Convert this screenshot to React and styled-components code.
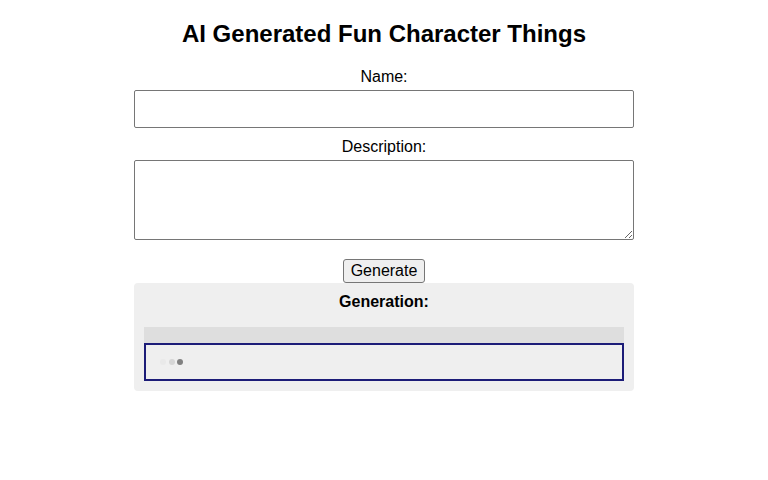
import React, { useState } from "react";
import styled, { createGlobalStyle } from "styled-components";

const GlobalStyle = createGlobalStyle`
  body {
    margin: 0;
    background: #fff;
    font-family: "Liberation Sans", Arial, sans-serif;
    color: #000;
  }
`;

const Page = styled.div`
  width: 500px;
  margin: 0 auto;
  padding-top: 20px;
  display: flex;
  flex-direction: column;
  align-items: center;
`;

const Title = styled.h1`
  margin: 0 0 21px;
  font-size: 24px;
  font-weight: bold;
  line-height: 27px;
  text-align: center;
`;

const Label = styled.label`
  display: block;
  font-size: 16px;
  line-height: 18px;
  margin-bottom: 4px;
  text-align: center;
`;

const TextInput = styled.input`
  box-sizing: border-box;
  width: 500px;
  height: 38px;
  margin: 0 0 10px;
  border: 1px solid #767676;
  border-radius: 2px;
  font: 16px "Liberation Sans", Arial, sans-serif;
  padding: 4px 8px;
`;

const TextArea = styled.textarea`
  box-sizing: border-box;
  display: block;
  width: 500px;
  height: 80px;
  margin: 0 0 19px;
  border: 1px solid #767676;
  border-radius: 2px;
  font: 16px "Liberation Sans", Arial, sans-serif;
  padding: 4px 8px;
`;

const Button = styled.button`
  box-sizing: border-box;
  height: 24px;
  padding: 2px 7px;
  font: 16px "Liberation Sans", Arial, sans-serif;
  line-height: 18px;
  color: #000;
  background: #efefef;
  border: 1px solid #767676;
  border-radius: 3px;
  cursor: pointer;
`;

const Panel = styled.section`
  box-sizing: border-box;
  width: 500px;
  padding: 10px 10px 10px;
  background: #efefef;
  border-radius: 4px;
`;

const PanelTitle = styled.h3`
  margin: 0 0 16px;
  font-size: 16px;
  line-height: 18px;
  font-weight: bold;
  text-align: center;
`;

const Bar = styled.div`
  height: 16px;
  background: #dedede;
`;

const Output = styled.div`
  box-sizing: border-box;
  height: 38px;
  border: 2px solid #1c1c78;
  display: flex;
  align-items: center;
  gap: 2.5px;
  padding-left: 14px;
`;

const Dot = styled.span`
  width: 6px;
  height: 6px;
  border-radius: 50%;
  background: ${(p) => p.$color};
`;

export default function App() {
  const [name, setName] = useState("");
  const [desc, setDesc] = useState("");

  return (
    <>
      <GlobalStyle />
      <Page>
        <Title>AI Generated Fun Character Things</Title>
        <Label htmlFor="name">Name:</Label>
        <TextInput id="name" value={name} onChange={(e) => setName(e.target.value)} />
        <Label htmlFor="desc">Description:</Label>
        <TextArea id="desc" value={desc} onChange={(e) => setDesc(e.target.value)} />
        <Button>Generate</Button>
        <Panel>
          <PanelTitle>Generation:</PanelTitle>
          <Bar />
          <Output>
            <Dot $color="#e9e9e9" />
            <Dot $color="#d6d6d6" />
            <Dot $color="#808080" />
          </Output>
        </Panel>
      </Page>
    </>
  );
}
